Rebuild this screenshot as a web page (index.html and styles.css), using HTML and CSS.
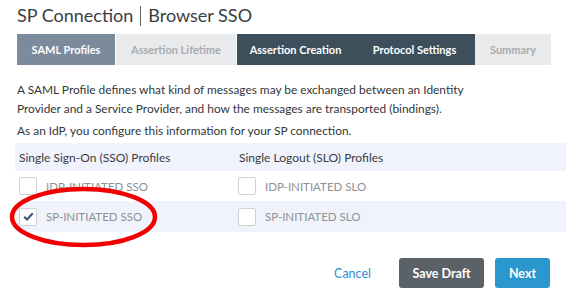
FILE: index.html
```html
<!DOCTYPE html>
<html lang="en">
<head>
  <meta charset="UTF-8">
  <title>SP Connection | Browser SSO</title>
  <link rel="stylesheet" href="styles.css">
</head>
<body>
  <div class="page">
    <h1 class="title">SP Connection <span class="sep"></span> Browser SSO</h1>
    <div class="tabs">
      <div class="tab active">SAML Profiles</div>
      <div class="tab off" style="width:120px">Assertion Lifetime</div>
      <div class="tab done" style="width:117px">Assertion Creation</div>
      <div class="tab done" style="width:121px">Protocol Settings</div>
      <div class="tab off" style="width:76px">Summary</div>
    </div>
    <p class="intro">A SAML Profile defines what kind of messages may be exchanged between an Identity<br>Provider and a Service Provider, and how the messages are transported (bindings).</p>
    <p class="intro small">As an IdP, you configure this information for your SP connection.</p>
    <div class="profiles">
      <div class="row head">
        <div class="cell">Single Sign-On (SSO) Profiles</div>
        <div class="cell">Single Logout (SLO) Profiles</div>
      </div>
      <div class="row">
        <label class="cell"><span class="box"></span>IDP-INITIATED SSO</label>
        <label class="cell"><span class="box"></span>IDP-INITIATED SLO</label>
      </div>
      <div class="row shade">
        <label class="cell"><span class="box checked">
          <svg width="11" height="9" viewBox="0 0 11 9"><path d="M1.2 4.8 L4 7.4 L9.8 1.3" fill="none" stroke="#3d5573" stroke-width="2.1"/></svg>
        </span>SP-INITIATED SSO</label>
        <label class="cell"><span class="box"></span>SP-INITIATED SLO</label>
      </div>
      <svg class="circle" width="170" height="66" viewBox="0 0 170 66"><ellipse cx="83.5" cy="31" rx="71.5" ry="28" fill="none" stroke="#f00000" stroke-width="4.5"/></svg>
    </div>
    <div class="actions">
      <a class="cancel" href="#">Cancel</a>
      <button class="btn draft">Save Draft</button>
      <button class="btn next">Next</button>
    </div>
  </div>
</body>
</html>
```

FILE: styles.css
```css
body {
  margin: 0;
  background: #fff;
  font-family: 'Lato', 'Open Sans', sans-serif;
  color: #3a3d40;
}
.page {
  width: 566px;
  height: 300px;
  overflow: hidden;
  position: relative;
}
.title {
  margin: 0;
  padding: 4px 0 0 17px;
  height: 30px;
  box-sizing: border-box;
  font-size: 18px;
  font-weight: 400;
  color: #3a3d41;
  display: flex;
  align-items: flex-start;
  gap: 7px;
}
.sep {
  display: inline-block;
  width: 1px;
  height: 20px;
  background: #666;
  margin-top: 2px;
}
.tabs {
  display: flex;
  margin: 4px 0 0 17px;
  height: 31px;
}
.tab {
  width: 98px;
  height: 31px;
  display: flex;
  align-items: center;
  justify-content: center;
  font-size: 11px;
  font-weight: 700;
  margin-right: 1px;
}
.tab.active {background: #7b8b9c; color: #fff;}
.tab.off {background: #e9eaeb; color: #a8acb0;}
.tab.done {background: #3c4f5b; color: #fff; margin-right: 0;}
.intro {
  margin: 15px 0 0 17px;
  width: 480px;
  font-size: 11.9px;
  line-height: 19px;
  color: #33363a;
  white-space: nowrap;
}
.intro.small {margin-top: 3px;}
.profiles {
  margin: 3px 0 0 15px;
  position: relative;
}
.row {
  display: flex;
  height: 30px;
  align-items: center;
}
.row.head {background: #f0f3fc; height: 28px;}
.row.shade {background: #f0f3fc; height: 31px;}
.cell {
  box-sizing: border-box;
  width: 223px;
  display: flex;
  align-items: center;
  font-size: 12px;
  color: #3a3d41;
  padding-left: 4px;
}
.cell + .cell {padding-left: 0;}
.row.head .cell + .cell {padding-left: 1px;}
label.cell {
  color: #8d9196;
  font-size: 11.5px;
}
.box {
  box-sizing: border-box;
  width: 18px;
  height: 18px;
  border: 1px solid #d0d2d4;
  border-radius: 2px;
  background: #fff;
  margin-right: 9px;
  display: flex;
  align-items: center;
  justify-content: center;
}
.circle {
  position: absolute;
  left: -15px;
  top: 43px;
}
.actions {
  display: flex;
  justify-content: flex-end;
  align-items: center;
  padding: 26px 16px 0 0;
}
.cancel {
  color: #2b8fd3;
  font-size: 12.5px;
  text-decoration: none;
  margin-right: 28px;
}
.btn {
  height: 30px;
  border: none;
  border-radius: 3px;
  color: #fff;
  font-family: 'Lato', 'Open Sans', sans-serif;
  font-size: 12.5px;
  font-weight: 700;
  padding: 0;
}
.draft {background: #5a6167; width: 85px; margin-right: 11px;}
.next {background: #2a97cf; width: 55px;}
```
